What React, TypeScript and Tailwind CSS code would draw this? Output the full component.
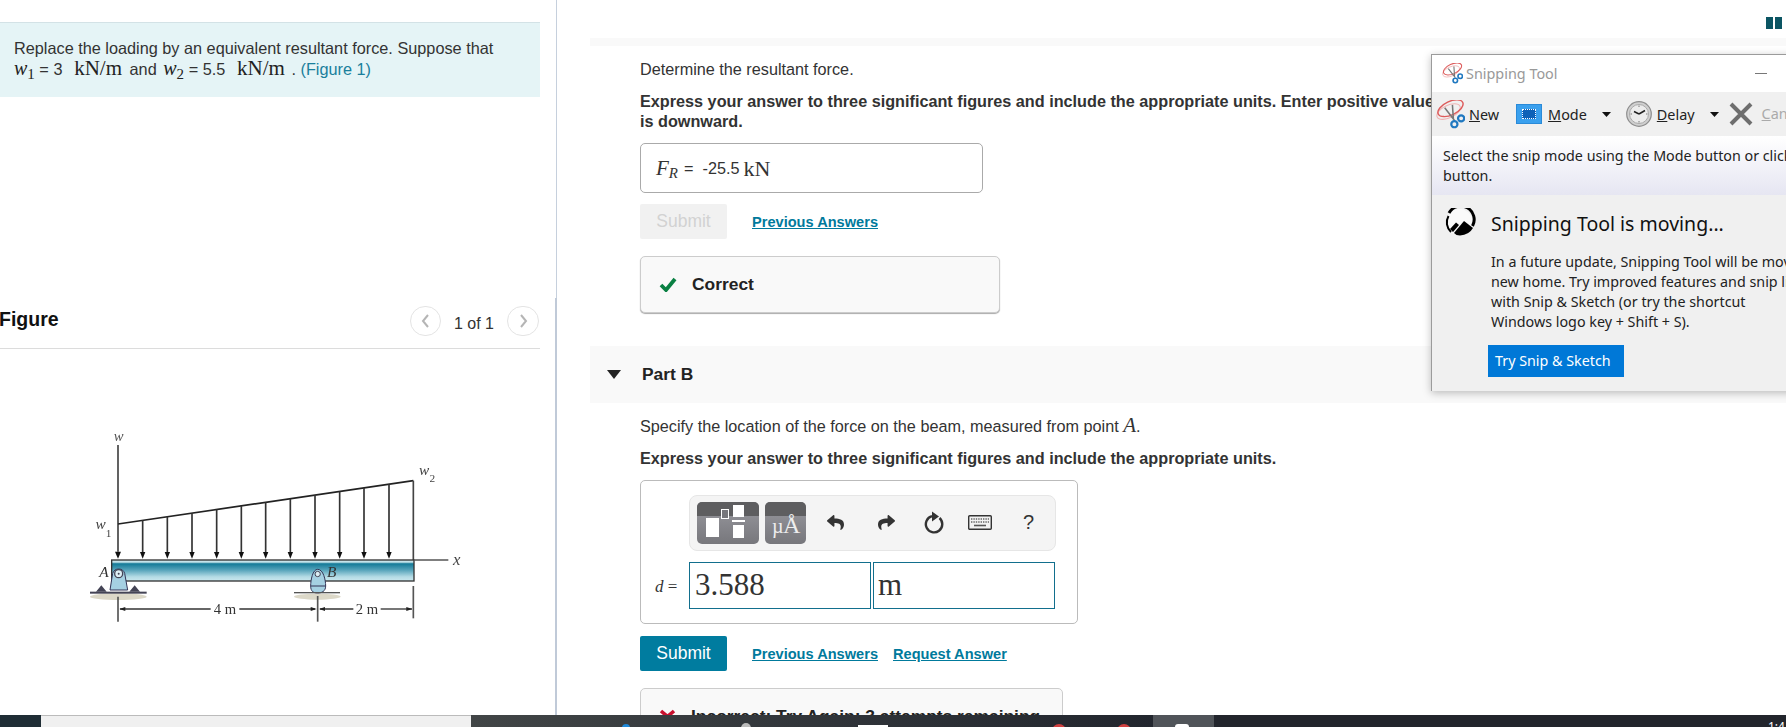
import React from "react";
import { FaReply, FaShare } from "react-icons/fa";

// --- Small helpers ---

function TextLink({ children }: { children: React.ReactNode }) {
  return <a className="text-[14.6px] font-bold text-[#007a9c] underline">{children}</a>;
}

function MathText({ children }: { children: React.ReactNode }) {
  return <span className="ml-[2px] font-['Liberation_Serif',serif] text-[21px] text-[#222]">{children}</span>;
}

function W({ n }: { n: number }) {
  return (
    <span className="font-['Liberation_Serif',serif] text-[20px] italic text-[#222]">
      w<sub className="text-[15px] not-italic">{n}</sub>
    </span>
  );
}

// --- Beam figure ---

const LOAD_ARROWS = [248, 322, 396, 470, 544, 617, 691, 765, 839, 912, 987];

function BeamFigure() {
  const loadY = (x: number) => 342 - ((x - 174) * 130) / 886;
  return (
    <svg width="420" height="240" viewBox="0 0 1260 720" className="ml-[60px] mt-[61px] block blur-[0.4px]">
      <defs>
        <linearGradient id="beam" x1="0" y1="0" x2="0" y2="1">
          <stop offset="0" stopColor="#c5e3ea" />
          <stop offset="0.1" stopColor="#c5e3ea" />
          <stop offset="0.18" stopColor="#137a98" />
          <stop offset="0.45" stopColor="#4f9fb7" />
          <stop offset="0.8" stopColor="#b4dbe5" />
          <stop offset="1" stopColor="#cbe8ef" />
        </linearGradient>
      </defs>
      <text x="176" y="94" textAnchor="middle" fontFamily="Liberation Serif" fontStyle="italic" fontSize="44" fill="#555">w</text>
      <text x="122" y="358" textAnchor="middle" fontFamily="Liberation Serif" fontStyle="italic" fontSize="46" fill="#444">w</text>
      <text x="146" y="382" textAnchor="middle" fontFamily="Liberation Serif" fontSize="34" fill="#444">1</text>
      <text x="1092" y="194" textAnchor="middle" fontFamily="Liberation Serif" fontStyle="italic" fontSize="46" fill="#444">w</text>
      <text x="1117" y="216" textAnchor="middle" fontFamily="Liberation Serif" fontSize="34" fill="#444">2</text>
      <line x1="174" y1="105" x2="174" y2="425" stroke="#444" strokeWidth="5" />
      <line x1="174" y1="342" x2="1060" y2="212" stroke="#222" strokeWidth="5" />
      <line x1="1060" y1="212" x2="1060" y2="450" stroke="#444" strokeWidth="5" />
      <polygon points="165,425 183,425 174,446" fill="#111" />
      {LOAD_ARROWS.map((x) => (
        <g key={x}>
          <line x1={x} y1={loadY(x)} x2={x} y2="426" stroke="#333" strokeWidth="5" />
          <polygon points={`${x - 8},426 ${x + 8},426 ${x},446`} fill="#111" />
        </g>
      ))}
      <rect x="155" y="450" width="907" height="63" fill="url(#beam)" stroke="#333" strokeWidth="4" />
      <line x1="1062" y1="450" x2="1165" y2="450" stroke="#555" strokeWidth="5" />
      <text x="1190" y="464" textAnchor="middle" fontFamily="Liberation Serif" fontStyle="italic" fontSize="50" fill="#444">x</text>

      {/* support A */}
      <ellipse cx="175" cy="560" rx="85" ry="10" fill="#dcd8c8" />
      <path d="M150 540 L158 490 A19 19 0 0 1 194 490 L203 540 Z" fill="#a5d0e2" stroke="#335" strokeWidth="3" />
      <circle cx="176" cy="491" r="12" fill="#ddeef4" stroke="#445" strokeWidth="4" />
      <circle cx="176" cy="491" r="3" fill="#445" />
      <rect x="90" y="545" width="170" height="6" fill="#445" />
      <path d="M108 545 L124 526 L140 545 Z M208 545 L224 526 L240 545 Z" fill="#445" />
      <text x="132" y="502" textAnchor="middle" fontFamily="Liberation Serif" fontStyle="italic" fontSize="46" fill="#333">A</text>

      {/* support B */}
      <ellipse cx="772" cy="560" rx="70" ry="9" fill="#dcd8c8" />
      <path d="M773 478 C790 478 797 510 797 528 C797 544 785 549 773 549 C760 549 752 544 752 528 C752 510 758 478 773 478 Z" fill="#a5d0e2" stroke="#335" strokeWidth="3" />
      <line x1="753" y1="528" x2="796" y2="528" stroke="#335" strokeWidth="3" />
      <circle cx="773" cy="492" r="8" fill="#ddeef4" stroke="#445" strokeWidth="3" />
      <rect x="702" y="546" width="138" height="4" fill="#555" />
      <text x="815" y="500" textAnchor="middle" fontFamily="Liberation Serif" fontStyle="italic" fontSize="46" fill="#333">B</text>

      {/* dimensions */}
      <line x1="174" y1="560" x2="174" y2="635" stroke="#555" strokeWidth="5" />
      <line x1="773" y1="558" x2="773" y2="635" stroke="#555" strokeWidth="5" />
      <line x1="1060" y1="528" x2="1060" y2="625" stroke="#555" strokeWidth="5" />
      <line x1="180" y1="597" x2="452" y2="597" stroke="#333" strokeWidth="4" />
      <line x1="538" y1="597" x2="765" y2="597" stroke="#333" strokeWidth="4" />
      <line x1="780" y1="597" x2="880" y2="597" stroke="#333" strokeWidth="4" />
      <line x1="962" y1="597" x2="1056" y2="597" stroke="#333" strokeWidth="4" />
      <polygon points="178,597 196,591 196,603" fill="#222" />
      <polygon points="770,597 752,591 752,603" fill="#222" />
      <polygon points="777,597 795,591 795,603" fill="#222" />
      <polygon points="1057,597 1039,591 1039,603" fill="#222" />
      <text x="495" y="611" textAnchor="middle" fontFamily="Liberation Serif" fontSize="44" fill="#333">4 m</text>
      <text x="921" y="611" textAnchor="middle" fontFamily="Liberation Serif" fontSize="44" fill="#333">2 m</text>
    </svg>
  );
}

// --- Left column ---

function ProblemColumn() {
  return (
    <aside className="relative h-full w-[557px] shrink-0 border-r border-[#c6d0dd]">
      <div className="absolute right-[-1px] top-[298px] h-[417px] w-[2px] bg-[#c0cad8]" />
      <div className="mt-[22px] h-[75px] w-[540px] border-t border-[#d3e2e6] bg-[#e5f4f6] pl-[14px] pt-[15px] text-[16.27px] leading-[21px] text-[#333]">
        <p>Replace the loading by an equivalent resultant force. Suppose that</p>
        <p className="mt-[-1px]">
          <W n={1} /> = 3 <MathText>&nbsp;kN/m</MathText> <span className="ml-[3px]">and</span>{" "}
          <span className="ml-[2px]">
            <W n={2} />
          </span>{" "}
          = 5.5 <MathText>&nbsp;kN/m</MathText> <span className="ml-[2px]">.</span>{" "}
          <a className="text-[#1a7f9c]">(Figure 1)</a>
        </p>
      </div>
      <div className="mt-[206px] flex h-[46px] w-[540px] items-start justify-between border-b border-[#dcdcdc] pr-[1px]">
        <h2 className="ml-[-1px] mt-[4px] text-[19.5px] font-bold leading-[24px] text-[#111]">Figure</h2>
        <div className="mt-[3px] flex items-start">
          <button className="flex h-[30px] w-[31px] items-center justify-center rounded-full border border-[#e4e4e4]">
            <Chevron points="9,3 4,9 9,15" />
          </button>
          <span className="ml-[13px] mr-[13px] mt-[7px] text-[16px] leading-[21px] text-[#333]">1 of 1</span>
          <button className="flex h-[30px] w-[32px] items-center justify-center rounded-full border border-[#e4e4e4]">
            <Chevron points="4,3 9,9 4,15" />
          </button>
        </div>
      </div>
      <BeamFigure />
    </aside>
  );
}

function Chevron({ points }: { points: string }) {
  return (
    <svg width="13" height="18" viewBox="0 0 13 18" fill="none" stroke="#b5b5b5" strokeWidth="2">
      <polyline points={points} />
    </svg>
  );
}

// --- Math toolbar icons ---

function TemplateIcon() {
  return (
    <div className="relative h-[42px] w-[62px] overflow-hidden rounded-[5px] bg-gradient-to-b from-[#9a9aa0] to-[#77777c]">
      <div className="h-[14px] bg-[#5e5e60]" />
      <div className="absolute left-[9px] top-[16px] h-[19px] w-[13px] bg-white" />
      <div className="absolute left-[24px] top-[7px] h-[10px] w-[8px] border border-white bg-[#77777c]" />
      <div className="absolute left-[36px] top-[3px] h-[12px] w-[11px] bg-white" />
      <div className="absolute left-[35px] top-[18px] h-[2px] w-[13px] bg-white" />
      <div className="absolute left-[36px] top-[23px] h-[13px] w-[11px] bg-white" />
    </div>
  );
}

function UnitsIcon() {
  return (
    <div className="relative h-[42px] w-[41px] overflow-hidden rounded-[5px] bg-gradient-to-b from-[#9a9aa0] to-[#77777c]">
      <div className="h-[14px] bg-[#5e5e60]" />
      <span className="absolute left-[7px] top-[12px] font-['Liberation_Serif',serif] text-[20px] leading-[24px] text-[#eee]">
        µ
      </span>
      <span className="absolute left-[18px] top-[9px] font-['Liberation_Serif',serif] text-[24px] leading-[28px] text-[#eee]">
        Å
      </span>
    </div>
  );
}

function ResetIcon() {
  return (
    <svg width="22" height="24" viewBox="0 0 22 24" fill="none">
      <path d="M9 6.2 A8.2 8.2 0 1 0 16.5 8" stroke="#333" strokeWidth="2.4" />
      <polygon points="9,1.5 16,6.5 9,11.5" fill="#333" />
    </svg>
  );
}

function KeyboardIcon() {
  return (
    <svg width="24" height="15" viewBox="0 0 24 15">
      <rect x="0.7" y="0.7" width="22.6" height="13.6" rx="1" fill="#f2f2f2" stroke="#333" strokeWidth="1.4" />
      <path d="M3 4 H21 M3 7 H21" stroke="#666" strokeWidth="1.4" strokeDasharray="1.4 1" />
      <line x1="6" y1="10.5" x2="18" y2="10.5" stroke="#555" strokeWidth="1.6" />
    </svg>
  );
}

// --- Right column ---

function AnswerColumn() {
  return (
    <main className="ml-[33px] h-full flex-1 overflow-hidden text-[16.23px] leading-[21px] text-[#333]">
      <div className="mt-[38px] h-[8px] bg-[#f9f9f9]" />
      <section className="pl-[50px]">
        <p className="mt-[13px]">Determine the resultant force.</p>
        <p className="mt-[11px] w-[1000px] font-bold leading-[20px]">
          Express your answer to three significant figures and include the appropriate units. Enter positive value
          <br />
          is downward.
        </p>
        <div className="mt-[12px] flex h-[50px] w-[343px] items-center rounded-[5px] border border-[#aaa] pl-[15px]">
          <span className="font-['Liberation_Serif',serif] text-[21px] italic">
            F<sub className="text-[15px]">R</sub>
          </span>
          <span className="ml-[6px]">=</span>
          <span className="ml-[9px]">-25.5</span>
          <span className="ml-[4px] font-['Liberation_Serif',serif] text-[22px]">kN</span>
        </div>
        <div className="mt-[11px] flex h-[35px] items-center">
          <button className="h-[35px] w-[87px] rounded-[2px] bg-[#f1f1f1] text-[17.5px] text-[#d2d2d2]">Submit</button>
          <span className="ml-[25px]">
            <TextLink>Previous Answers</TextLink>
          </span>
        </div>
        <div className="mt-[17px] flex h-[57px] w-[360px] items-center rounded-[5px] border border-[#ccc] bg-[#f9f9f9] pl-[18px] shadow-[0_1px_1px_#aaa]">
          <svg width="18" height="15" viewBox="0 0 18 15">
            <path d="M2 8 L7 13 L16 2" fill="none" stroke="#0a8043" strokeWidth="3.8" />
          </svg>
          <span className="ml-[15px] text-[17.4px] font-bold text-[#222]">Correct</span>
        </div>
      </section>

      <div className="mt-[33px] flex h-[57px] items-center bg-[#f9f9f9]">
        <svg width="14" height="9" viewBox="0 0 14 9" className="ml-[17px]">
          <polygon points="0,0 14,0 7,9" fill="#222" />
        </svg>
        <h3 className="ml-[21px] text-[17.4px] font-bold text-[#222]">Part B</h3>
      </div>

      <section className="pl-[50px]">
        <p className="mt-[12px]">
          Specify the location of the force on the beam, measured from point{" "}
          <span className="font-['Liberation_Serif',serif] text-[21px] italic">A</span>.
        </p>
        <p className="mt-[11px] font-bold">
          Express your answer to three significant figures and include the appropriate units.
        </p>
        <div className="mt-[11px] h-[144px] w-[438px] rounded-[5px] border border-[#bbb] pl-[48px] pt-[14px]">
          <div className="flex h-[56px] w-[367px] items-center rounded-[8px] border border-[#e6e6e6] bg-[#f4f4f4] pl-[7px]">
            <TemplateIcon />
            <div className="ml-[6px]">
              <UnitsIcon />
            </div>
            <FaReply className="ml-[21px] mb-[2px] size-[17px] text-[#333]" />
            <FaShare className="ml-[34px] mb-[2px] size-[17px] text-[#333]" />
            <div className="ml-[28px] mb-[2px] flex w-[22px]">
              <ResetIcon />
            </div>
            <div className="ml-[23px] mb-[2px]">
              <KeyboardIcon />
            </div>
            <span className="ml-[31px] mb-[2px] text-[20px] text-[#333]">?</span>
          </div>
          <div className="relative mt-[11px] flex gap-[2px]">
            <span className="absolute left-[-34px] top-[14px] font-['Liberation_Serif',serif] text-[17px] text-[#333]">
              <i>d</i> =
            </span>
            <div className="flex h-[47px] w-[182px] items-center border border-[#126f8d] pb-[3px] pl-[5px] font-['Liberation_Serif',serif] text-[31px] text-[#333]">
              3.588
            </div>
            <div className="flex h-[47px] w-[182px] items-center border border-[#126f8d] pb-[2px] pl-[4px] font-['Liberation_Serif',serif] text-[31px] text-[#333]">
              m
            </div>
          </div>
        </div>
        <div className="mt-[12px] flex h-[35px] items-center">
          <button className="h-[35px] w-[87px] rounded-[2px] bg-[#007c9f] text-[17.5px] text-white">Submit</button>
          <span className="ml-[25px]">
            <TextLink>Previous Answers</TextLink>
          </span>
          <span className="ml-[15px]">
            <TextLink>Request Answer</TextLink>
          </span>
        </div>
        <div className="mt-[17px] flex h-[56px] w-[423px] items-center rounded-[5px] border border-[#ccc] bg-[#f9f9f9] pl-[18px]">
          <svg width="17" height="15" viewBox="0 0 17 15">
            <path d="M2 2 L15 13 M15 2 L2 13" fill="none" stroke="#c8102e" strokeWidth="3.6" />
          </svg>
          <span className="ml-[15px] text-[17.4px] font-bold text-[#222]">Incorrect; Try Again; 3 attempts remaining</span>
        </div>
      </section>
    </main>
  );
}

// --- Snipping Tool window ---

function ScissorsIcon({ size }: { size: number }) {
  return (
    <svg width={size} height={size} viewBox="0 0 30 30" fill="none">
      <ellipse cx="13" cy="12" rx="13" ry="6.5" stroke="#efb4b4" strokeWidth="1.1" transform="rotate(-25 13 12)" />
      <ellipse cx="15" cy="8.5" rx="14" ry="7" stroke="#dd5c5c" strokeWidth="1.5" transform="rotate(-25 15 8.5)" />
      <path d="M9 8 L19 21 M17 5 L18 20" stroke="#777" strokeWidth="1.6" />
      <circle cx="19" cy="25" r="3.2" stroke="#1f78c0" strokeWidth="2.3" />
      <circle cx="26" cy="19" r="3.2" stroke="#1f78c0" strokeWidth="2.3" />
    </svg>
  );
}

function ClockIcon() {
  return (
    <svg width="26" height="26" viewBox="0 0 26 26">
      <circle cx="13" cy="13" r="12.3" fill="#d0d0d0" stroke="#8e8e8e" strokeWidth="1.2" />
      <circle cx="13" cy="13" r="9.5" fill="#ececec" stroke="#aaa" />
      <path d="M13 13 L8 10.5 M13 13 L19 9.5" stroke="#222" strokeWidth="1.5" />
      <path d="M13 4.5 V6 M13 20 V21.5 M4.5 13 H6 M20 13 H21.5" stroke="#777" />
    </svg>
  );
}

function ToolLabel({ first, rest }: { first: string; rest: string }) {
  return (
    <span className="text-[14.4px] text-[#222]">
      <span className="underline">{first}</span>
      {rest}
    </span>
  );
}

function DropArrow() {
  return (
    <svg width="9" height="5" viewBox="0 0 9 5">
      <polygon points="0,0 9,0 4.5,5" fill="#111" />
    </svg>
  );
}

function SnipWindow() {
  return (
    <div className="absolute left-[1431px] top-[54px] h-[337px] w-[400px] border border-[#9b9b9b] bg-white font-['Noto_Sans',sans-serif] shadow-[0_2px_8px_rgba(0,0,0,0.25)]">
      <div className="flex h-[37px] items-center pl-[10px]">
        <ScissorsIcon size={21} />
        <span className="ml-[3px] text-[14.4px] text-[#999]">Snipping Tool</span>
        <div className="ml-[197px] h-px w-[12px] bg-[#777]" />
      </div>
      <div className="flex h-[44px] items-center bg-[#f0f0f0] pl-[4px]">
        <ScissorsIcon size={29} />
        <span className="ml-[4px]">
          <ToolLabel first="N" rest="ew" />
        </span>
        <div className="ml-[17px] flex h-[20px] w-[26px] items-center justify-center border border-[#2a8ad8] bg-[#3aa0ee]">
          <div className="h-[10px] w-[14px] border border-dotted border-white bg-[#0e62b8]" />
        </div>
        <span className="ml-[6px]">
          <ToolLabel first="M" rest="ode" />
        </span>
        <div className="ml-[15px]">
          <DropArrow />
        </div>
        <div className="ml-[15px]">
          <ClockIcon />
        </div>
        <span className="ml-[5px]">
          <ToolLabel first="D" rest="elay" />
        </span>
        <div className="ml-[15px]">
          <DropArrow />
        </div>
        <svg width="24" height="24" viewBox="0 0 24 24" className="ml-[10px]">
          <path d="M2 2 L22 22 M22 2 L2 22" stroke="#6e6e6e" strokeWidth="4" />
        </svg>
        <span className="ml-[9px] text-[14.4px] text-[#aaa]">
          <span className="underline">C</span>ancel
        </span>
      </div>
      <div className="h-[59px] bg-gradient-to-b from-white to-[#e6e6f2] pl-[11px] pt-[10px] text-[14.3px] leading-[20px] text-[#222]">
        <p className="whitespace-nowrap">Select the snip mode using the Mode button or click the</p>
        <p>button.</p>
      </div>
      <div className="flex h-[196px] bg-[#f0f0f0]">
        <svg width="32" height="30" viewBox="0 0 32 30" className="ml-[13px] mt-[13px] shrink-0">
          <circle cx="14.5" cy="14" r="13" fill="#fafafa" />
          <path d="M4 5 A13 13 0 0 1 27.5 18" fill="none" stroke="#000" strokeWidth="3" />
          <path d="M3.5 8 A13 13 0 0 0 6 24" fill="none" stroke="#000" strokeWidth="2" />
          <path d="M9 25 L19 13 L28 20 Q24 27 15 27.5 Q11 27.5 9 25 Z" fill="#000" />
          <path d="M5 21 L11 14.5 L14 17 L8 24 Z" fill="#000" />
        </svg>
        <div className="ml-[14px]">
          <h4 className="mt-[14px] whitespace-nowrap text-[19.5px] leading-[30px] text-[#111]">Snipping Tool is moving...</h4>
          <div className="mt-[13px] whitespace-nowrap text-[14.3px] leading-[20px] text-[#222]">
            <p>In a future update, Snipping Tool will be moving to a</p>
            <p>new home. Try improved features and snip like usual</p>
            <p>with Snip &amp; Sketch (or try the shortcut</p>
            <p>Windows logo key + Shift + S).</p>
          </div>
          <button className="ml-[-3px] mt-[13px] flex h-[32px] w-[136px] items-center bg-[#0078d7] pl-[7px] text-[14.3px] text-white">
            Try Snip &amp; Sketch
          </button>
        </div>
      </div>
    </div>
  );
}

// --- Taskbar ---

function Taskbar() {
  return (
    <footer className="relative flex h-[12px] shrink-0 overflow-hidden bg-[#22252c]">
      <div className="h-full w-[41px] bg-[#1f2d35]" />
      <div className="h-full w-[430px] border-t border-[#bbb] bg-[#f0f0f0]" />
      <div className="h-full w-[682px] bg-gradient-to-r from-[#414546] to-[#22262e]" />
      <div className="h-full w-[61px] bg-[#505459]" />
      <span className="absolute left-[622px] top-[9px] size-[8px] rounded-full bg-[#1e88d8]" />
      <span className="absolute left-[741px] top-[8px] size-[10px] rounded-full bg-[#bbb]" />
      <span className="absolute left-[858px] top-[10px] h-[2px] w-[30px] bg-white" />
      <span className="absolute left-[1052px] top-[9px] size-[14px] rounded-full bg-[#d04040]" />
      <span className="absolute left-[1117px] top-[9px] size-[14px] rounded-full bg-[#d04040]" />
      <span className="absolute left-[1175px] top-[9px] h-[6px] w-[14px] rounded-full bg-white" />
      <span className="absolute left-[1768px] top-[5px] font-['Noto_Sans',sans-serif] text-[12px] leading-[14px] text-white">1:4</span>
    </footer>
  );
}

export default function App() {
  return (
    <div className="relative flex h-[727px] w-[1786px] flex-col overflow-hidden bg-white font-['Liberation_Sans',Arial,sans-serif]">
      <div className="flex h-[715px]">
        <ProblemColumn />
        <AnswerColumn />
      </div>
      <Taskbar />
      <svg width="16" height="12" viewBox="0 0 16 12" className="absolute left-[1766px] top-[17px]">
        <path d="M0 0 H7 V12 H0 Z M9 0 H16 V12 H9 Z" fill="#0b5563" />
      </svg>
      <SnipWindow />
    </div>
  );
}
